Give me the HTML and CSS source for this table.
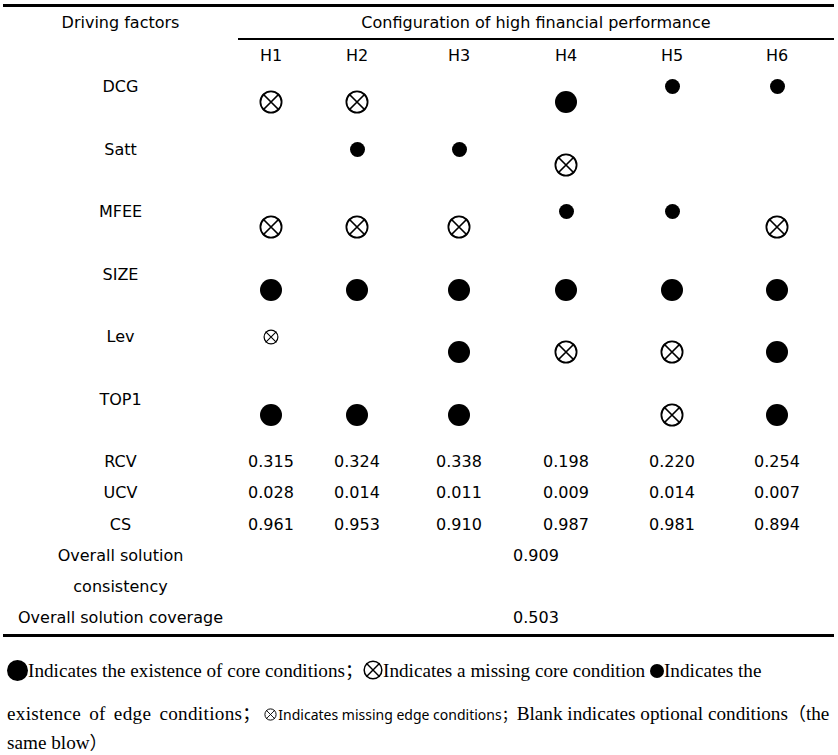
FILE: index.html
```html
<!DOCTYPE html>
<html lang="en">
<head>
<meta charset="utf-8">
<title>Configuration of high financial performance</title>
<link rel="stylesheet" href="styles.css">
</head>
<body>
<svg class="defs" width="0" height="0" aria-hidden="true">
  <defs>
    <symbol id="dot-core" viewBox="0 0 22 22"><circle cx="11" cy="11" r="11" fill="#000"/></symbol>
    <symbol id="dot-edge" viewBox="0 0 15 15"><circle cx="7.5" cy="7.5" r="7.5" fill="#000"/></symbol>
    <symbol id="x-core" viewBox="0 0 24 24">
      <circle cx="12" cy="12" r="10.6" fill="none" stroke="#000" stroke-width="1.8"/>
      <path d="M4 4 L20 20 M20 4 L4 20" stroke="#000" stroke-width="1.7" fill="none"/>
    </symbol>
    <symbol id="x-edge" viewBox="0 0 16 16">
      <circle cx="8" cy="8" r="6.9" fill="none" stroke="#000" stroke-width="1.2"/>
      <path d="M2.6 2.6 L13.4 13.4 M13.4 2.6 L2.6 13.4" stroke="#000" stroke-width="1.1" fill="none"/>
    </symbol>
  </defs>
</svg>

<div class="page">
  <div class="tbl">
    <div class="cell head-lab">Driving factors</div>
    <div class="cell conf">Configuration of high financial performance</div>
    <div class="cell">H1</div>
    <div class="cell">H2</div>
    <div class="cell">H3</div>
    <div class="cell">H4</div>
    <div class="cell">H5</div>
    <div class="cell">H6</div>

    <!-- DCG -->
    <div class="cell lab">DCG</div>
    <div class="cell core"><svg class="s-xc"><use href="#x-core"/></svg></div>
    <div class="cell core"><svg class="s-xc"><use href="#x-core"/></svg></div>
    <div class="cell"></div>
    <div class="cell core"><svg class="s-dc"><use href="#dot-core"/></svg></div>
    <div class="cell edge"><svg class="s-de"><use href="#dot-edge"/></svg></div>
    <div class="cell edge"><svg class="s-de"><use href="#dot-edge"/></svg></div>

    <!-- Satt -->
    <div class="cell lab">Satt</div>
    <div class="cell"></div>
    <div class="cell edge"><svg class="s-de"><use href="#dot-edge"/></svg></div>
    <div class="cell edge"><svg class="s-de"><use href="#dot-edge"/></svg></div>
    <div class="cell core"><svg class="s-xc"><use href="#x-core"/></svg></div>
    <div class="cell"></div>
    <div class="cell"></div>

    <!-- MFEE -->
    <div class="cell lab">MFEE</div>
    <div class="cell core"><svg class="s-xc"><use href="#x-core"/></svg></div>
    <div class="cell core"><svg class="s-xc"><use href="#x-core"/></svg></div>
    <div class="cell core"><svg class="s-xc"><use href="#x-core"/></svg></div>
    <div class="cell edge"><svg class="s-de"><use href="#dot-edge"/></svg></div>
    <div class="cell edge"><svg class="s-de"><use href="#dot-edge"/></svg></div>
    <div class="cell core"><svg class="s-xc"><use href="#x-core"/></svg></div>

    <!-- SIZE -->
    <div class="cell lab">SIZE</div>
    <div class="cell core"><svg class="s-dc"><use href="#dot-core"/></svg></div>
    <div class="cell core"><svg class="s-dc"><use href="#dot-core"/></svg></div>
    <div class="cell core"><svg class="s-dc"><use href="#dot-core"/></svg></div>
    <div class="cell core"><svg class="s-dc"><use href="#dot-core"/></svg></div>
    <div class="cell core"><svg class="s-dc"><use href="#dot-core"/></svg></div>
    <div class="cell core"><svg class="s-dc"><use href="#dot-core"/></svg></div>

    <!-- Lev -->
    <div class="cell lab">Lev</div>
    <div class="cell edge"><svg class="s-xe"><use href="#x-edge"/></svg></div>
    <div class="cell"></div>
    <div class="cell core"><svg class="s-dc"><use href="#dot-core"/></svg></div>
    <div class="cell core"><svg class="s-xc"><use href="#x-core"/></svg></div>
    <div class="cell core"><svg class="s-xc"><use href="#x-core"/></svg></div>
    <div class="cell core"><svg class="s-dc"><use href="#dot-core"/></svg></div>

    <!-- TOP1 -->
    <div class="cell lab">TOP1</div>
    <div class="cell core"><svg class="s-dc"><use href="#dot-core"/></svg></div>
    <div class="cell core"><svg class="s-dc"><use href="#dot-core"/></svg></div>
    <div class="cell core"><svg class="s-dc"><use href="#dot-core"/></svg></div>
    <div class="cell"></div>
    <div class="cell core"><svg class="s-xc"><use href="#x-core"/></svg></div>
    <div class="cell core"><svg class="s-dc"><use href="#dot-core"/></svg></div>

    <!-- RCV -->
    <div class="cell">RCV</div>
    <div class="cell">0.315</div>
    <div class="cell">0.324</div>
    <div class="cell">0.338</div>
    <div class="cell">0.198</div>
    <div class="cell">0.220</div>
    <div class="cell">0.254</div>

    <!-- UCV -->
    <div class="cell">UCV</div>
    <div class="cell">0.028</div>
    <div class="cell">0.014</div>
    <div class="cell">0.011</div>
    <div class="cell">0.009</div>
    <div class="cell">0.014</div>
    <div class="cell">0.007</div>

    <!-- CS -->
    <div class="cell">CS</div>
    <div class="cell">0.961</div>
    <div class="cell">0.953</div>
    <div class="cell">0.910</div>
    <div class="cell">0.987</div>
    <div class="cell">0.981</div>
    <div class="cell">0.894</div>

    <div class="cell">Overall solution<br>consistency</div>
    <div class="cell span-all">0.909</div>

    <div class="cell">Overall solution coverage</div>
    <div class="cell span-all">0.503</div>
  </div>

  <div class="legend">
    <div class="lg lg1"><svg class="lg-dc"><use href="#dot-core"/></svg>Indicates the existence of core conditions<span class="cjk">；</span><svg class="lg-xc"><use href="#x-core"/></svg>Indicates a missing core condition <svg class="lg-de"><use href="#dot-edge"/></svg>Indicates the</div>
    <div class="lg lg2"><span class="wide">existence of edge conditions</span><span class="cjk">；</span><svg class="lg-xe"><use href="#x-edge"/></svg><span class="sans">Indicates missing edge conditions<span class="cjk-s">；</span></span>Blank indicates optional conditions<span class="cjk">（</span>the</div>
    <div class="lg lg3">same blow<span class="cjk">）</span></div>
  </div>
</div>
</body>
</html>
```

FILE: styles.css
```css
* {
  box-sizing: border-box;
}

html, body {
  margin: 0;
  padding: 0;
  background: #ffffff;
  color: #000000;
}

.defs {
  position: absolute;
  width: 0;
  height: 0;
  overflow: hidden;
}

.page {
  width: 838px;
  padding: 4px 0 0 3px;
}

.tbl {
  display: grid;
  width: 831px;
  grid-template-columns: 235px 66px 106px 98px 116px 96px 114px;
  grid-template-rows: 33px 31px repeat(6, 62.5px) repeat(3, 31.25px) 62.5px 31.25px;
  border-top: 3px solid #000;
  border-bottom: 3px solid #000;
  font-family: "DejaVu Sans", Verdana, sans-serif;
  font-size: 16px;
  line-height: 31.25px;
  text-align: center;
}

.cell {
  min-width: 0;
  white-space: nowrap;
}

.head-lab {
  grid-row: span 2;
  line-height: 31px;
}

.conf {
  grid-column: span 6;
  line-height: 31px;
  border-bottom: 2px solid #000;
}

.span-all {
  grid-column: span 6;
}

.core {
  display: flex;
  align-items: center;
  justify-content: center;
}

.edge {
  display: flex;
  align-items: flex-start;
  justify-content: center;
}

.s-dc {
  width: 22px;
  height: 22px;
}

.s-xc {
  width: 24px;
  height: 24px;
}

.s-de {
  width: 15px;
  height: 15px;
  margin-top: 8px;
}

.s-xe {
  width: 16px;
  height: 16px;
  margin-top: 7.5px;
}

.legend {
  padding: 14.5px 0 0 4px;
  font-family: "Liberation Serif", "Times New Roman", "Noto Sans CJK SC", serif;
  font-size: 19.2px;
  white-space: nowrap;
}

.lg {
  line-height: 27px;
}

.lg1 {
  line-height: 36px;
  margin-bottom: 9.5px;
}

.cjk {
  font-family: "Noto Sans CJK SC", sans-serif;
  font-size: 18px;
}

.cjk-s {
  font-family: "Noto Sans CJK SC", sans-serif;
  font-size: 15px;
}

.wide {
  word-spacing: 3px;
  letter-spacing: 0.3px;
}

.sans {
  font-family: "Noto Sans", sans-serif;
  font-size: 14px;
  margin-left: 1px;
}

.lg-dc {
  width: 21px;
  height: 21px;
  vertical-align: -4px;
}

.lg-xc {
  width: 20px;
  height: 20px;
  vertical-align: -3px;
}

.lg-de {
  width: 14px;
  height: 14px;
  vertical-align: -1px;
}

.lg-xe {
  width: 13px;
  height: 13px;
  vertical-align: -1px;
  margin-left: 4px;
}
```
